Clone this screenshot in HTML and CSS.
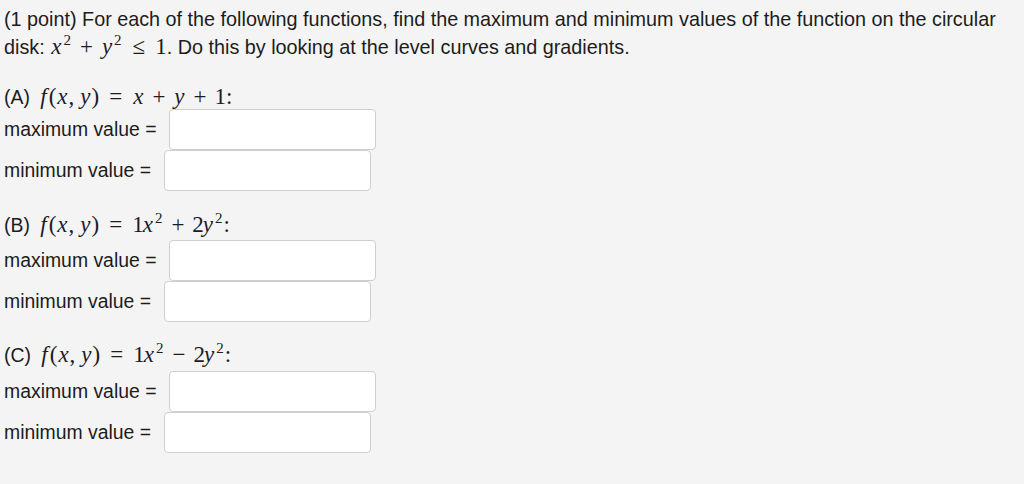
FILE: index.html
```html
<!DOCTYPE html>
<html>
<head>
<meta charset="utf-8">
<link rel="stylesheet" href="styles.css">
</head>
<body>
<div class="page">
  <p class="intro">(1 point) For each of the following functions, find the maximum and minimum values of the function on the circular disk: <span class="m"><i>x</i><sup>2</sup><span class="op">+</span><i>y</i><sup>2</sup><span class="rel">≤</span>1</span>. Do this by looking at the level curves and gradients.</p>

  <section class="part part-a">
    <div class="head head-a">(A) <span class="m"><i class="f">f</i>(<i>x</i>,<span class="sp"></span><i>y</i>)<span class="rel">=</span><i>x</i><span class="op">+</span><i>y</i><span class="op">+</span>1:</span></div>
    <div class="row"><span class="lbl">maximum value =</span><span class="box"></span></div>
    <div class="row"><span class="lbl">minimum value =</span><span class="box"></span></div>
  </section>

  <section class="part part-b">
    <div class="head head-b">(B) <span class="m"><i class="f">f</i>(<i>x</i>,<span class="sp"></span><i>y</i>)<span class="rel">=</span><span class="tight">1</span><i>x</i><sup>2</sup><span class="op">+</span><span class="tight">2</span><i>y</i><sup>2</sup>:</span></div>
    <div class="row"><span class="lbl">maximum value =</span><span class="box"></span></div>
    <div class="row"><span class="lbl">minimum value =</span><span class="box"></span></div>
  </section>

  <section class="part part-c">
    <div class="head head-c">(C) <span class="m"><i class="f">f</i>(<i>x</i>,<span class="sp"></span><i>y</i>)<span class="rel">=</span><span class="tight">1</span><i>x</i><sup>2</sup><span class="op">−</span><span class="tight">2</span><i>y</i><sup>2</sup>:</span></div>
    <div class="row"><span class="lbl">maximum value =</span><span class="box"></span></div>
    <div class="row"><span class="lbl">minimum value =</span><span class="box"></span></div>
  </section>
</div>
</body>
</html>
```

FILE: styles.css
```css
html, body {
  margin: 0;
  padding: 0;
  background: #f4f4f4;
}
body {
  font-family: "Liberation Sans", Arial, sans-serif;
  font-size: 19.4px;
  color: #1c1c1c;
}
.page {
  padding: 5px 0 0 4px;
}
.intro {
  margin: 0;
  line-height: 28px;
  width: 1012px;
  font-size: 19.8px;
}
.m {
  font-family: "Liberation Serif", "DejaVu Serif", serif;
  font-size: 23px;
}
.m i {
  font-style: italic;
  margin: 0 1px;
}
.m i.f {
  margin-left: 5px;
  margin-right: 2px;
}
.m sup {
  font-size: 15px;
  line-height: 0;
  vertical-align: 9px;
  margin: 0 1px;
}
.op {
  margin: 0 8px;
}
.rel {
  margin: 0 10px;
}
.sp {
  display: inline-block;
  width: 5px;
}
.tight {
  margin-right: -2px;
}
.part-a {
  margin-top: 24px;
}
.part-b {
  margin-top: 22px;
}
.part-c {
  margin-top: 21px;
}
.head {
  line-height: 24px;
}
.head-a {
  height: 24px;
}
.head-b {
  height: 27px;
}
.head-c {
  height: 28px;
}
.row {
  display: flex;
  align-items: center;
  gap: 13px;
  height: 41px;
}
.lbl {
  white-space: nowrap;
}
.box {
  display: block;
  box-sizing: border-box;
  width: 207px;
  height: 41px;
  background: #fff;
  border: 1px solid #cfcfcf;
  border-radius: 4px;
}
```
